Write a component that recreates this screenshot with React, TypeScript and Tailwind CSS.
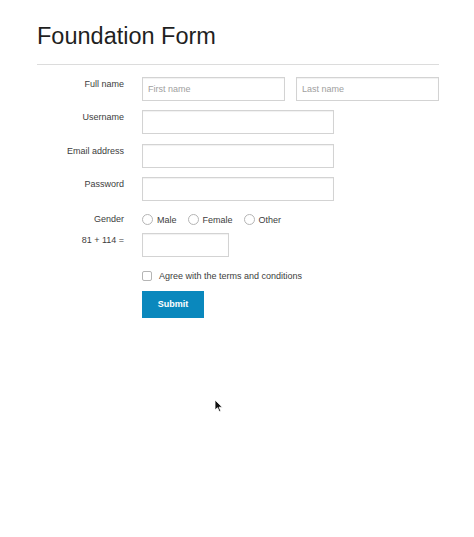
import React from "react";

const inputCls =
  "h-[24px] border border-[#d3d3d3] bg-white px-[5px] text-[9px] text-[#333] placeholder:text-[#a0a0a0] outline-none shadow-[inset_0_1px_1px_rgba(0,0,0,0.06)]";

function Label({ children }: { children: React.ReactNode }) {
  return (
    <div className="w-[87px] shrink-0 pt-[1px] pr-0 text-right text-[9px] leading-[12px] text-[#3d3d3d]">
      {children}
    </div>
  );
}

function Radio({ label }: { label: string }) {
  return (
    <label className="flex items-center gap-[4px]">
      <span className="block h-[11px] w-[11px] rounded-full border border-[#b5b5b5] bg-white" />
      <span className="text-[9px] leading-[12px] text-[#3d3d3d]">{label}</span>
    </label>
  );
}

export default function App() {
  return (
    <div
      className="relative h-[537px] w-[474px] bg-white"
      style={{ fontFamily: '"Liberation Sans", Arial, sans-serif' }}
    >
      <div className="w-[439px] pl-[37px] pt-[24px]">
        <h1 className="text-[23.5px] leading-[24px] font-normal text-[#1f1f1f]">Foundation Form</h1>
        <div className="mt-[16px] h-px bg-[#dcdcdc]" />

        {/* Full name */}
        <div className="mt-[12px] flex gap-[18px]">
          <Label>Full name</Label>
          <div className="flex gap-[11px]">
            <input className={`${inputCls} w-[143px]`} placeholder="First name" />
            <input className={`${inputCls} w-[143px]`} placeholder="Last name" />
          </div>
        </div>

        {/* Username */}
        <div className="mt-[9px] flex gap-[18px]">
          <Label>Username</Label>
          <input className={`${inputCls} w-[192px]`} />
        </div>

        {/* Email */}
        <div className="mt-[10px] flex gap-[18px]">
          <Label>Email address</Label>
          <input className={`${inputCls} w-[192px]`} />
        </div>

        {/* Password */}
        <div className="mt-[9px] flex gap-[18px]">
          <Label>Password</Label>
          <input type="password" className={`${inputCls} w-[192px]`} />
        </div>

        {/* Gender */}
        <div className="mt-[11px] flex gap-[18px]">
          <Label>Gender</Label>
          <div className="flex h-[14px] items-center gap-[11px] pt-[1px]">
            <Radio label="Male" />
            <Radio label="Female" />
            <Radio label="Other" />
          </div>
        </div>

        {/* Captcha */}
        <div className="mt-[7px] flex gap-[18px]">
          <Label>81 + 114 =</Label>
          <input className={`${inputCls} w-[87px]`} />
        </div>

        {/* Terms */}
        <div className="mt-[14px] flex gap-[18px]">
          <div className="w-[87px] shrink-0" />
          <label className="flex h-[10px] items-center gap-[7px]">
            <span className="block h-[10px] w-[10px] rounded-[2px] border border-[#b5b5b5] bg-white" />
            <span className="text-[9px] leading-[12px] text-[#3d3d3d]">Agree with the terms and conditions</span>
          </label>
        </div>

        {/* Submit */}
        <div className="mt-[10px] flex gap-[18px]">
          <div className="w-[87px] shrink-0" />
          <button className="h-[27px] w-[62px] bg-[#0a88bd] text-[9px] font-bold text-white">Submit</button>
        </div>
      </div>

      {/* mouse cursor */}
      <svg className="absolute left-[214px] top-[399px]" width="10" height="14" viewBox="0 0 10 14">
        <path d="M1 1 L1 11 L3.5 8.7 L5.3 12.6 L6.8 11.9 L5.1 8.2 L8.3 8.2 Z" fill="#111" stroke="#fff" strokeWidth="0.8" />
      </svg>
    </div>
  );
}
